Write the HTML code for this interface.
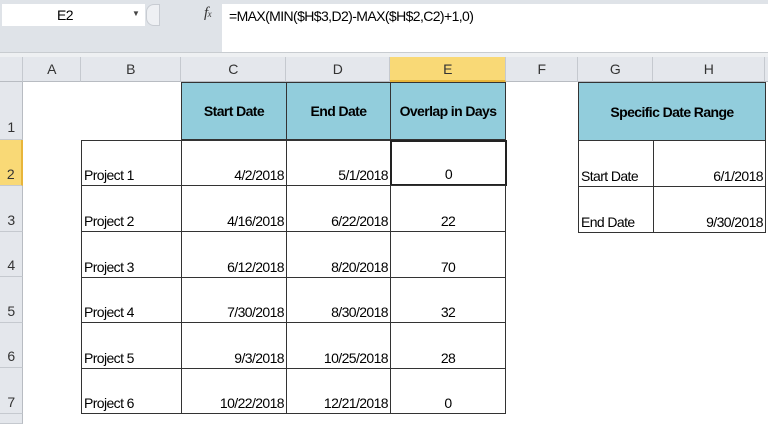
<!DOCTYPE html>
<html><head><style>
*{margin:0;padding:0;box-sizing:border-box}
body{width:768px;height:421px;overflow:hidden;background:#fff;font-family:"Liberation Sans",sans-serif;font-size:14px;color:#000;position:relative;letter-spacing:-0.6px}
.a{position:absolute}
.ch{position:absolute;top:57px;height:25px;background:#e4e7ec;border-right:1px solid #c5c9cf;border-bottom:1px solid #b8bcc2;text-align:center;line-height:25px;color:#333;font-size:14px}
.rh{position:absolute;left:0;width:23px;background:#e4e7ec;border-bottom:1px solid #c5c9cf;border-right:1px solid #b8bcc2;color:#333;text-align:center;font-size:14px}
.c{position:absolute;border:1px solid #333;line-height:1;padding:0 2px;white-space:nowrap}
.t{background:#92cddc;font-weight:bold;display:flex;align-items:center;justify-content:center}
.v{display:flex;align-items:flex-end;padding-bottom:3px}
.r{justify-content:flex-end}
.m{justify-content:center}
</style></head><body>
<div class="a" style="left:0;top:0;width:768px;height:52px;background:#dfe3e8"></div>
<div class="a" style="left:2px;top:4px;width:143px;height:22px;background:#fff"></div>
<div class="a" style="left:57px;top:7px;font-size:14px">E2</div>
<div class="a" style="left:132px;top:9px;font-size:8px;color:#444">▼</div>
<div class="a" style="left:146px;top:4px;width:14px;height:22px;border-radius:8px 0 0 8px;background:#eef0f3;border:1px solid #c8ccd2"></div>
<div class="a" style="left:204px;top:5px;font-family:'Liberation Serif',serif;font-style:italic;font-size:15px;color:#333">f<span style="font-size:9px">x</span></div>
<div class="a" style="left:222px;top:4px;width:546px;height:48px;background:#fff"></div>
<div class="a" style="left:229px;top:8px;font-size:14px">=MAX(MIN($H$3,D2)-MAX($H$2,C2)+1,0)</div>
<div class="a" style="left:0;top:52px;width:768px;height:5px;background:#eef0f2;border-top:1px solid #c8ccd0"></div>

<div class="ch" style="left:0;width:23px"></div>
<div class="ch" style="left:23px;width:58px">A</div>
<div class="ch" style="left:81px;width:100px">B</div>
<div class="ch" style="left:181px;width:105px">C</div>
<div class="ch" style="left:286px;width:104px">D</div>
<div class="ch" style="left:390px;width:116px;background:#f9d976;border-bottom:2px solid #e8b53a">E</div>
<div class="ch" style="left:506px;width:72px">F</div>
<div class="ch" style="left:578px;width:75px">G</div>
<div class="ch" style="left:653px;width:112px">H</div>
<div class="ch" style="left:765px;width:10px"></div>

<div class="rh" style="top:82px;height:58px;padding-top:37px">1</div>
<div class="rh" style="top:140px;height:46px;padding-top:26px;background:#f9d976;border-right:2px solid #e8b53a">2</div>
<div class="rh" style="top:186px;height:46px;padding-top:26px">3</div>
<div class="rh" style="top:232px;height:45px;padding-top:25px">4</div>
<div class="rh" style="top:277px;height:46px;padding-top:26px">5</div>
<div class="rh" style="top:323px;height:45px;padding-top:25px">6</div>
<div class="rh" style="top:368px;height:46px;padding-top:26px">7</div>
<div class="rh" style="top:414px;height:10px"></div>

<div class="c t" style="left:181px;top:82px;width:106px;height:58px">Start Date</div>
<div class="c t" style="left:286px;top:82px;width:105px;height:58px">End Date</div>
<div class="c t" style="left:390px;top:82px;width:116px;height:58px">Overlap in Days</div>
<div class="c t" style="left:578px;top:82px;width:188px;height:59px">Specific Date Range</div>

<div class="c v" style="left:578px;top:140px;width:76px;height:47px">Start Date</div>
<div class="c v r" style="left:653px;top:140px;width:113px;height:47px">6/1/2018</div>
<div class="c v" style="left:578px;top:186px;width:76px;height:47px">End Date</div>
<div class="c v r" style="left:653px;top:186px;width:113px;height:47px">9/30/2018</div>

<div class="c v" style="left:81px;top:140px;width:101px;height:46px">Project 1</div>
<div class="c v r" style="left:181px;top:140px;width:106px;height:46px">4/2/2018</div>
<div class="c v r" style="left:286px;top:140px;width:105px;height:46px">5/1/2018</div>
<div class="c v m" style="left:390px;top:140px;width:117px;height:46px;border:2px solid #222">0</div>

<div class="c v" style="left:81px;top:185px;width:101px;height:47px">Project 2</div>
<div class="c v r" style="left:181px;top:185px;width:106px;height:47px">4/16/2018</div>
<div class="c v r" style="left:286px;top:185px;width:105px;height:47px">6/22/2018</div>
<div class="c v m" style="left:390px;top:185px;width:116px;height:47px">22</div>

<div class="c v" style="left:81px;top:231px;width:101px;height:47px">Project 3</div>
<div class="c v r" style="left:181px;top:231px;width:106px;height:47px">6/12/2018</div>
<div class="c v r" style="left:286px;top:231px;width:105px;height:47px">8/20/2018</div>
<div class="c v m" style="left:390px;top:231px;width:116px;height:47px">70</div>

<div class="c v" style="left:81px;top:277px;width:101px;height:46px">Project 4</div>
<div class="c v r" style="left:181px;top:277px;width:106px;height:46px">7/30/2018</div>
<div class="c v r" style="left:286px;top:277px;width:105px;height:46px">8/30/2018</div>
<div class="c v m" style="left:390px;top:277px;width:116px;height:46px">32</div>

<div class="c v" style="left:81px;top:322px;width:101px;height:47px">Project 5</div>
<div class="c v r" style="left:181px;top:322px;width:106px;height:47px">9/3/2018</div>
<div class="c v r" style="left:286px;top:322px;width:105px;height:47px">10/25/2018</div>
<div class="c v m" style="left:390px;top:322px;width:116px;height:47px">28</div>

<div class="c v" style="left:81px;top:368px;width:101px;height:46px">Project 6</div>
<div class="c v r" style="left:181px;top:368px;width:106px;height:46px">10/22/2018</div>
<div class="c v r" style="left:286px;top:368px;width:105px;height:46px">12/21/2018</div>
<div class="c v m" style="left:390px;top:368px;width:116px;height:46px">0</div>
</body></html>
